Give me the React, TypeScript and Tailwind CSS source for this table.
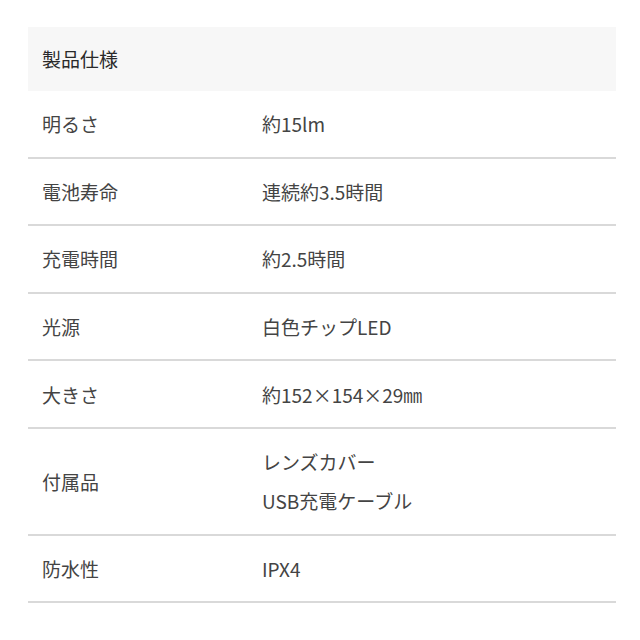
const rows: { label: string; values: string[] }[] = [
  { label: '明るさ', values: ['約15lm'] },
  { label: '電池寿命', values: ['連続約3.5時間'] },
  { label: '充電時間', values: ['約2.5時間'] },
  { label: '光源', values: ['白色チップLED'] },
  { label: '大きさ', values: ['約152×154×29㎜'] },
  { label: '付属品', values: ['レンズカバー', 'USB充電ケーブル'] },
  { label: '防水性', values: ['IPX4'] },
]

export default function App() {
  return (
    <div
      className="w-[640px] h-[640px] bg-white pt-[27px] pl-[28px] pr-[24px] text-[19px] text-[#444]"
      style={{ fontFamily: '"Noto Sans CJK JP", "Noto Sans", sans-serif' }}
    >
      <div className="h-[64px] bg-[#f7f7f7] flex items-center px-[14px] text-[#2a2a2a]">製品仕様</div>
      {rows.map((row) => (
        <div key={row.label} className="flex items-center border-b-2 border-[#d9d9d9] py-[13.3px]">
          <div className="w-[234px] pl-[14px] leading-[39px]">{row.label}</div>
          <div className="flex-1">
            {row.values.map((v) => (
              <div key={v} className="leading-[39px]">{v}</div>
            ))}
          </div>
        </div>
      ))}
    </div>
  )
}
